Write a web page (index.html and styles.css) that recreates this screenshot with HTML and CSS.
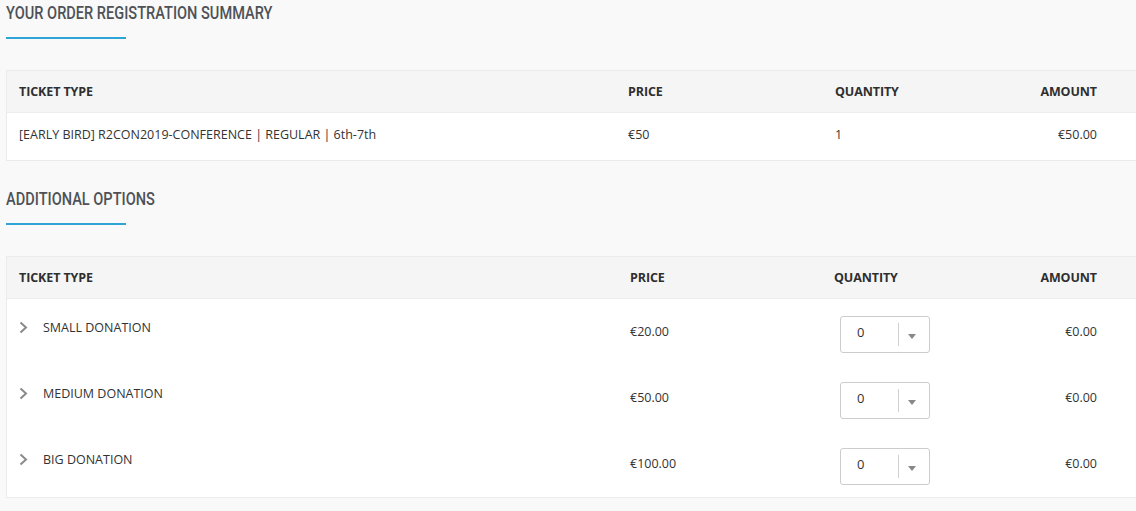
FILE: index.html
```html
<!DOCTYPE html>
<html>
<head>
<meta charset="utf-8">
<link rel="stylesheet" href="styles.css">
</head>
<body>
<div class="page">
  <section class="section">
    <h2 class="title"><span>YOUR ORDER REGISTRATION SUMMARY</span></h2>
    <div class="bar"></div>
    <div class="table t1">
      <div class="row head">
        <div>TICKET TYPE</div>
        <div>PRICE</div>
        <div>QUANTITY</div>
        <div class="r">AMOUNT</div>
      </div>
      <div class="row body">
        <div>[EARLY BIRD] R2CON2019-CONFERENCE | REGULAR | 6th-7th</div>
        <div>€50</div>
        <div>1</div>
        <div class="r">€50.00</div>
      </div>
    </div>
  </section>

  <section class="section s2">
    <h2 class="title"><span>ADDITIONAL OPTIONS</span></h2>
    <div class="bar"></div>
    <div class="table t2">
      <div class="row head">
        <div>TICKET TYPE</div>
        <div>PRICE</div>
        <div>QUANTITY</div>
        <div class="r">AMOUNT</div>
      </div>
      <div class="row opt">
        <div class="name"><svg class="chev" width="9" height="13" viewBox="0 0 9 13"><path d="M1.5 1.5 L7 6.5 L1.5 11.5" fill="none" stroke="#8a8a8a" stroke-width="2"/></svg><span>SMALL DONATION</span></div>
        <div class="price">€20.00</div>
        <div class="qty"><div class="select"><span class="val">0</span><span class="sep"></span><span class="caret"></span></div></div>
        <div class="r price">€0.00</div>
      </div>
      <div class="row opt">
        <div class="name"><svg class="chev" width="9" height="13" viewBox="0 0 9 13"><path d="M1.5 1.5 L7 6.5 L1.5 11.5" fill="none" stroke="#8a8a8a" stroke-width="2"/></svg><span>MEDIUM DONATION</span></div>
        <div class="price">€50.00</div>
        <div class="qty"><div class="select"><span class="val">0</span><span class="sep"></span><span class="caret"></span></div></div>
        <div class="r price">€0.00</div>
      </div>
      <div class="row opt">
        <div class="name"><svg class="chev" width="9" height="13" viewBox="0 0 9 13"><path d="M1.5 1.5 L7 6.5 L1.5 11.5" fill="none" stroke="#8a8a8a" stroke-width="2"/></svg><span>BIG DONATION</span></div>
        <div class="price">€100.00</div>
        <div class="qty"><div class="select"><span class="val">0</span><span class="sep"></span><span class="caret"></span></div></div>
        <div class="r price">€0.00</div>
      </div>
    </div>
  </section>
</div>
</body>
</html>
```
FILE: styles.css
```css
html, body {
  margin: 0;
  padding: 0;
  background: #f9f9f9;
  overflow: hidden;
}
body {
  font-family: "Open Sans", "Liberation Sans", sans-serif;
  color: #333;
}
.page {
  padding-left: 6px;
  width: 1136px;
}
.section {
  display: flex;
  flex-direction: column;
}
.s2 {
  margin-top: 25px;
}
.title {
  margin: 0;
  height: 26px;
  font-family: Roboto, "Liberation Sans", sans-serif;
  font-weight: 500;
  font-size: 18px;
  line-height: 26px;
  color: #4e5257;
  white-space: nowrap;
}
.title span {
  display: inline-block;
  transform: scaleX(0.81);
  transform-origin: left center;
}
.bar {
  margin-top: 11px;
  width: 120px;
  height: 2px;
  background: #2fa4d6;
}
.table {
  margin-top: 31px;
  width: 1140px;
  background: #fff;
  border-left: 1px solid #ebebeb;
  border-bottom: 1px solid #ebebeb;
}
.row {
  display: grid;
  align-items: center;
  padding: 0 50px 0 12px;
}
.t1 .row { grid-template-columns: 609px 207px 1fr 120px; }
.t2 .row { grid-template-columns: 611px 204px 1fr 120px; }
.r { text-align: right; }
.head {
  box-sizing: border-box;
  height: 43px;
  padding-bottom: 1px;
  background: #f5f5f5;
  border-top: 1px solid #ebebeb;
  border-bottom: 1px solid #ededed;
  font-size: 12.5px;
  font-weight: 700;
  letter-spacing: -0.1px;
  color: #2f2f2f;
}
.body {
  box-sizing: border-box;
  height: 47px;
  padding-bottom: 5px;
  font-size: 12.5px;
  color: #333;
}
.opt {
  height: 66px;
  font-size: 12.5px;
  color: #333;
}
.price {
  padding-bottom: 1px;
}
.name {
  align-self: start;
  padding-top: 20px;
  display: flex;
  align-items: center;
}
.chev {
  margin-right: 15px;
  flex: none;
}
.qty {
  padding-left: 6px;
  padding-top: 4px;
}
.select {
  width: 88px;
  height: 35px;
  border: 1px solid #cccccc;
  border-radius: 3px;
  background: #fff;
  display: flex;
  align-items: flex-start;
}
.val {
  padding-left: 16px;
  padding-top: 6px;
  width: 26px;
  font-size: 13px;
  line-height: 18px;
}
.sep {
  margin-top: 6px;
  margin-left: 15px;
  width: 1px;
  height: 23px;
  background: #d0d0d0;
}
.caret {
  margin-top: 17px;
  margin-left: 9px;
  width: 0;
  height: 0;
  border-left: 4.5px solid transparent;
  border-right: 4.5px solid transparent;
  border-top: 5px solid #888;
}
```
